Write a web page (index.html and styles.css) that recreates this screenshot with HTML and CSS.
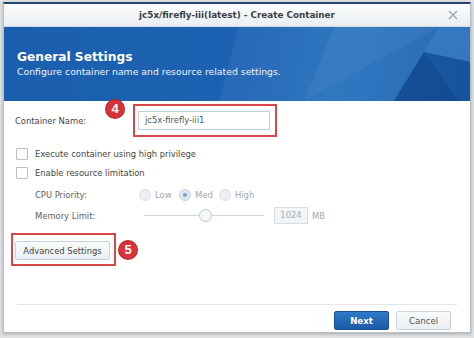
FILE: index.html
```html
<!DOCTYPE html>
<html>
<head>
<meta charset="utf-8">
<link rel="stylesheet" href="styles.css">
</head>
<body>
<div class="dialog">
  <div class="titlebar">
    <span class="title">jc5x/firefly-iii(latest) - Create Container</span>
    <span class="close">
      <svg width="10" height="10" viewBox="0 0 10 10"><path d="M1 1 L9 9 M9 1 L1 9" stroke="#9aa3ab" stroke-width="1.3" fill="none"/></svg>
    </span>
  </div>
  <div class="hero">
    <svg class="facets" width="467" height="74" viewBox="0 0 467 74" preserveAspectRatio="none">
      <polygon points="235,0 330,0 300,74 215,74" fill="#ffffff" opacity="0.05"/>
      <polygon points="300,74 330,0 435,0" fill="#ffffff" opacity="0.07"/>
      <polygon points="330,0 435,0 300,74" fill="#ffffff" opacity="0.03"/>
      <polygon points="435,0 467,0 467,35 420,25" fill="#9fd0ff" opacity="0.18"/>
      <polygon points="300,74 435,0 420,25 390,74" fill="#ffffff" opacity="0.06"/>
      <polygon points="420,25 467,35 467,74 390,74" fill="#0b3a7c" opacity="0.35"/>
      <polygon points="420,25 455,74 390,74" fill="#0a3270" opacity="0.25"/>
    </svg>
    <div class="hero-title">General Settings</div>
    <div class="hero-sub">Configure container name and resource related settings.</div>
  </div>
  <div class="content">
    <div class="row-name">
      <span class="label">Container Name:</span>
      <div class="mark-box name-mark">
        <span class="badge badge-4">4</span>
        <div class="textfield">jc5x-firefly-iii1</div>
      </div>
    </div>
    <div class="check-row first">
      <span class="checkbox"></span><span class="label">Execute container using high privilege</span>
    </div>
    <div class="check-row">
      <span class="checkbox"></span><span class="label">Enable resource limitation</span>
    </div>
    <div class="sub-row cpu">
      <span class="sub-label">CPU Priority:</span>
      <div class="radios">
        <span class="radio"></span><span class="opt">Low</span>
        <span class="radio checked"></span><span class="opt">Med</span>
        <span class="radio"></span><span class="opt">High</span>
      </div>
    </div>
    <div class="sub-row mem">
      <span class="sub-label">Memory Limit:</span>
      <div class="slider"><span class="thumb"></span></div>
      <div class="numfield">1024</div>
      <span class="unit">MB</span>
    </div>
    <div class="adv-row">
      <div class="mark-box adv-mark">
        <button class="btn-adv">Advanced Settings</button>
      </div>
      <span class="badge badge-5">5</span>
    </div>
  </div>
  <div class="footer">
    <button class="btn-next">Next</button>
    <button class="btn-cancel">Cancel</button>
  </div>
</div>
</body>
</html>
```

FILE: styles.css
```css
html, body {
  margin: 0;
  padding: 0;
}
body {
  background: #dfe1e3;
  width: 474px;
  height: 338px;
  overflow: hidden;
  padding: 2px 3px 0 3px;
  box-sizing: border-box;
  font-family: "DejaVu Sans", Verdana, sans-serif;
  font-size: 8.4px;
  color: #444;
}
.dialog {
  width: 468px;
  height: 331px;
  box-sizing: border-box;
  background: #fff;
  border: 1px solid #b9bec3;
  border-top: 2px solid #24466f;
  display: flex;
  flex-direction: column;
  box-shadow: 0 1px 3px rgba(0,0,0,0.25);
}
.titlebar {
  height: 22px;
  flex: none;
  display: flex;
  align-items: center;
  justify-content: center;
  position: relative;
  background: linear-gradient(#fbfcfd, #eaeef2);
  border-bottom: 1px solid #d3dae0;
}
.title {
  font-weight: bold;
  font-size: 8.8px;
  color: #3a3f45;
}
.close {
  position: absolute;
  right: 12px;
  top: 6px;
  width: 10px;
  height: 10px;
  display: flex;
}
.hero {
  height: 74px;
  flex: none;
  position: relative;
  background: linear-gradient(100deg, #1b5eae 0%, #1d62b2 50%, #236fbd 72%, #1d62b0 100%);
  color: #fff;
  padding: 23px 0 0 13px;
  box-sizing: border-box;
  overflow: hidden;
}
.facets {
  position: absolute;
  left: 0;
  top: 0;
}
.hero-title {
  position: relative;
  font-weight: bold;
  font-size: 12.2px;
  line-height: 15px;
}
.hero-sub {
  position: relative;
  font-size: 9.3px;
  line-height: 13px;
  margin-top: 0;
  color: #eef4fb;
}
.content {
  flex: 1;
  padding: 3px 0 0 11px;
  display: flex;
  flex-direction: column;
}
.row-name {
  display: flex;
  align-items: center;
  height: 33px;
}
.row-name .label {
  width: 118px;
}
.mark-box {
  border: 2px solid #d8474a;
  box-sizing: border-box;
  position: relative;
}
.name-mark {
  width: 144px;
  height: 33px;
  padding: 5px 0 0 3px;
}
.textfield {
  width: 132px;
  height: 19px;
  box-sizing: border-box;
  border: 1px solid #c7cfd6;
  background: #fff;
  padding: 0 0 0 6px;
  line-height: 17px;
  color: #555;
}
.badge {
  position: absolute;
  width: 18px;
  height: 18px;
  border-radius: 50%;
  background: #d8333a;
  box-shadow: 0 0 0 1px #b3262b;
  color: #fff;
  font-family: "Liberation Sans", Arial, sans-serif;
  font-weight: bold;
  font-size: 13px;
  line-height: 18px;
  text-align: center;
}
.badge-4 {
  left: -29px;
  top: -6px;
}
.check-row {
  display: flex;
  align-items: center;
  height: 19px;
}
.check-row.first {
  margin-top: 7px;
}
.checkbox {
  width: 12px;
  height: 12px;
  box-sizing: border-box;
  border: 1px solid #b8bfc6;
  border-radius: 1px;
  background: #fff;
  margin: 0 7px 0 1px;
}
.sub-row {
  display: flex;
  align-items: center;
  height: 21px;
  padding-left: 20px;
  color: #5d6166;
}
.sub-row.cpu {
  margin-top: 2px;
}
.sub-label {
  width: 104px;
}
.radios {
  display: flex;
  align-items: center;
}
.radio {
  width: 12px;
  height: 12px;
  box-sizing: border-box;
  border-radius: 50%;
  border: 1px solid #dde1e4;
  background: #eceef0;
  margin-right: 4px;
  position: relative;
}
.radio.checked {
  background: #dfe8f1;
  border-color: #c3d3e3;
}
.radio.checked::after {
  content: "";
  position: absolute;
  left: 3px;
  top: 3px;
  width: 4px;
  height: 4px;
  border-radius: 50%;
  background: #7fa0c4;
}
.opt {
  color: #a2a7ac;
  width: 24px;
}
.slider {
  width: 120px;
  height: 1px;
  background: #d4d8db;
  position: relative;
  margin: 0 10px 0 5px;
}
.thumb {
  position: absolute;
  left: 55px;
  top: -6px;
  width: 13px;
  height: 13px;
  box-sizing: border-box;
  border-radius: 50%;
  border: 1px solid #b9c8d6;
  background: #f4f8fb;
}
.numfield {
  width: 34px;
  height: 17px;
  box-sizing: border-box;
  border: 1px solid #d7dde2;
  background: #f3f6f8;
  color: #a6abb0;
  text-align: center;
  line-height: 15px;
  margin-right: 4px;
}
.unit {
  color: #a2a7ac;
}
.adv-row {
  display: flex;
  align-items: center;
  margin-top: 7px;
  margin-left: -4px;
  position: relative;
}
.adv-mark {
  width: 105px;
  height: 33px;
  padding: 6px 0 0 2px;
}
.btn-adv {
  width: 95px;
  height: 19px;
  box-sizing: border-box;
  border: 1px solid #c9d2da;
  border-radius: 2px;
  background: linear-gradient(#f9fbfc, #eaeff3);
  font-family: "DejaVu Sans", Verdana, sans-serif;
  font-size: 8.4px;
  color: #444;
  padding: 0;
}
.badge-5 {
  left: 108px;
  top: 8px;
}
.footer {
  flex: none;
  margin: 0 13px 0 13px;
  border-top: 1px solid #e2e6e9;
  height: 21px;
  display: flex;
  justify-content: flex-end;
  align-items: flex-start;
  padding: 6px 6px 0 0;
  gap: 7px;
}
.btn-next {
  width: 55px;
  height: 19px;
  box-sizing: border-box;
  border: 1px solid #1a4f94;
  border-radius: 2px;
  background: linear-gradient(#3079c9, #1c5aa7);
  color: #fff;
  font-family: "DejaVu Sans", Verdana, sans-serif;
  font-size: 8.6px;
  font-weight: bold;
  padding: 0;
}
.btn-cancel {
  width: 55px;
  height: 19px;
  box-sizing: border-box;
  border: 1px solid #cbd4db;
  border-radius: 2px;
  background: linear-gradient(#f9fbfc, #e9eef2);
  color: #555;
  font-family: "DejaVu Sans", Verdana, sans-serif;
  font-size: 8.6px;
  padding: 0;
}
```
